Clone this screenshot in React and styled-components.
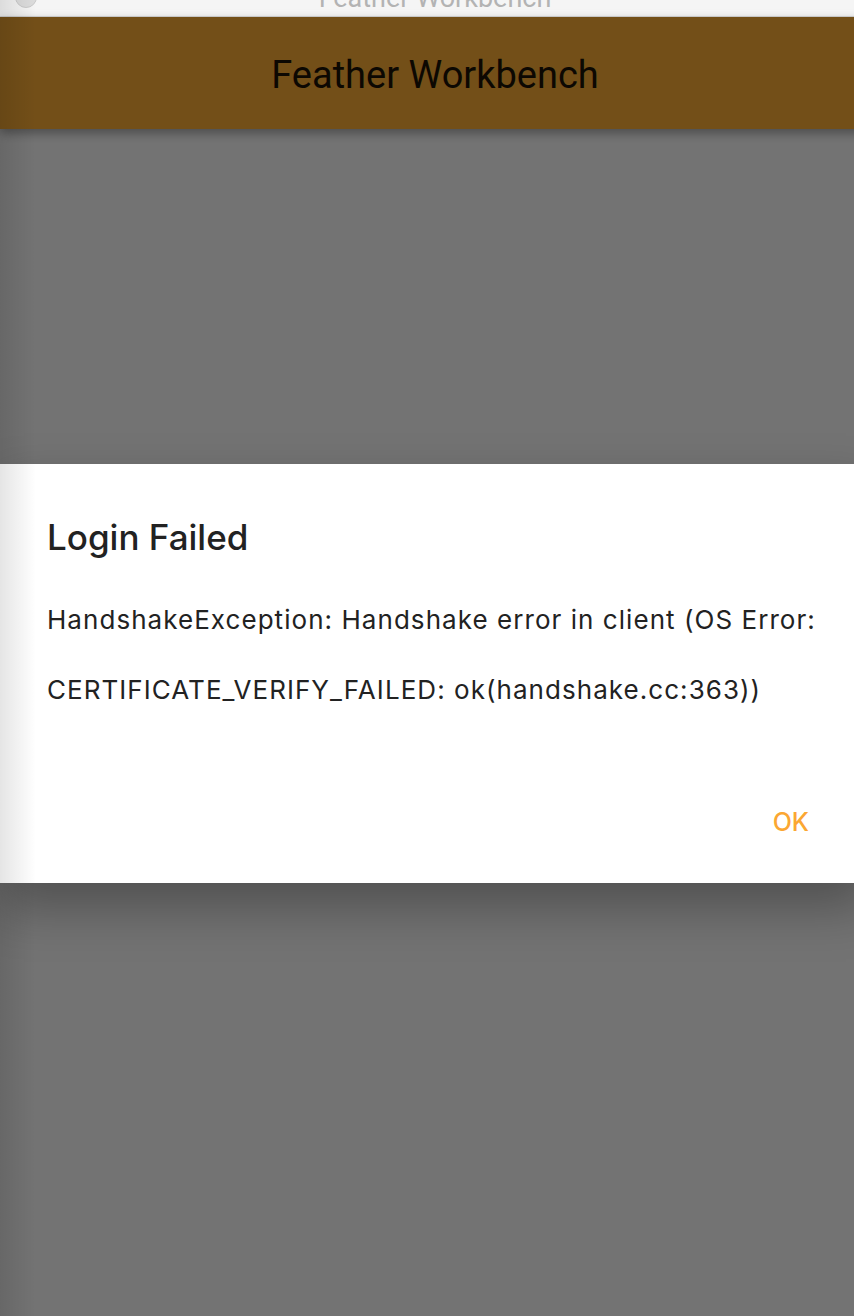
import styled, { createGlobalStyle } from "styled-components"

const GlobalStyle = createGlobalStyle`
  html, body {
    margin: 0;
    padding: 0;
    overflow: hidden;
    background: #737373;
  }
`

const Window = styled.div`
  position: relative;
  width: 870px;
  height: 1316px;
  display: flex;
  flex-direction: column;
  background: #ffffff;
  overflow: hidden;
  &::after {
    content: "";
    position: absolute;
    inset: 0 auto 0 0;
    width: 36px;
    background: linear-gradient(to right, rgba(0, 0, 0, 0.1), rgba(0, 0, 0, 0));
    pointer-events: none;
    z-index: 5;
  }
`

const TitleBar = styled.div`
  position: relative;
  height: 16px;
  flex: none;
  display: flex;
  justify-content: center;
  background: #f5f5f5;
  border-bottom: 1px solid #d6d6d6;
  overflow: hidden;
  .dot {
    position: absolute;
    left: 15px;
    top: -14px;
    width: 20px;
    height: 20px;
    border-radius: 50%;
    background: #dcdcdc;
    border: 1px solid #cacaca;
  }
  .title {
    margin-top: -15px;
    font-family: Roboto, "Liberation Sans", sans-serif;
    font-size: 27px;
    line-height: 27px;
    color: #b3b3b3;
  }
`

const AppBar = styled.header`
  height: 112px;
  flex: none;
  display: flex;
  align-items: center;
  justify-content: center;
  padding-top: 3px;
  box-sizing: border-box;
  background: #ffaf35;
  box-shadow: 0 4px 10px rgba(0, 0, 0, 0.35);
  font-family: Roboto, "Liberation Sans", sans-serif;
  font-size: 38px;
  color: #1c1206;
  z-index: 1;
`

const Body = styled.main`
  flex: 1;
  background: #ffffff;
`

const Barrier = styled.div`
  position: absolute;
  inset: 17px 0 0 0;
  background: rgba(0, 0, 0, 0.55);
  display: flex;
  align-items: center;
  padding-top: 14px;
  box-sizing: border-box;
  z-index: 2;
`

const Dialog = styled.div`
  width: 100%;
  height: 419px;
  box-sizing: border-box;
  background: #ffffff;
  box-shadow: 0 24px 48px rgba(0, 0, 0, 0.3);
  padding: 48px 47px 0 47px;
  display: flex;
  flex-direction: column;
  font-family: Inter, "Noto Sans", sans-serif;
  color: #222222;
`

const DialogTitle = styled.h2`
  margin: 0;
  font-size: 35px;
  font-weight: 500;
  line-height: 50px;
`

const DialogText = styled.p`
  margin: 23px 0 0 0;
  font-size: 26px;
  line-height: 70px;
  letter-spacing: 1.05px;
`

const Actions = styled.div`
  margin-top: auto;
  margin-bottom: 46px;
  display: flex;
  justify-content: flex-end;
  padding-right: 14px;
`

const TextButton = styled.button`
  border: none;
  background: none;
  padding: 0;
  font-family: Inter, "Noto Sans", sans-serif;
  font-size: 25px;
  font-weight: 500;
  color: ${props => props.color || "#fba732"};
  cursor: pointer;
`

const App = () => {
  return (
    <>
      <GlobalStyle />
      <Window>
        <TitleBar>
          <span className="dot" />
          <span className="title">Feather Workbench</span>
        </TitleBar>
        <AppBar>Feather Workbench</AppBar>
        <Body />
        <Barrier>
          <Dialog>
            <DialogTitle>Login Failed</DialogTitle>
            <DialogText>
              HandshakeException: Handshake error in client (OS Error:
              <br />
              CERTIFICATE_VERIFY_FAILED: ok(handshake.cc:363))
            </DialogText>
            <Actions>
              <TextButton>OK</TextButton>
            </Actions>
          </Dialog>
        </Barrier>
      </Window>
    </>
  )
}

export default App
